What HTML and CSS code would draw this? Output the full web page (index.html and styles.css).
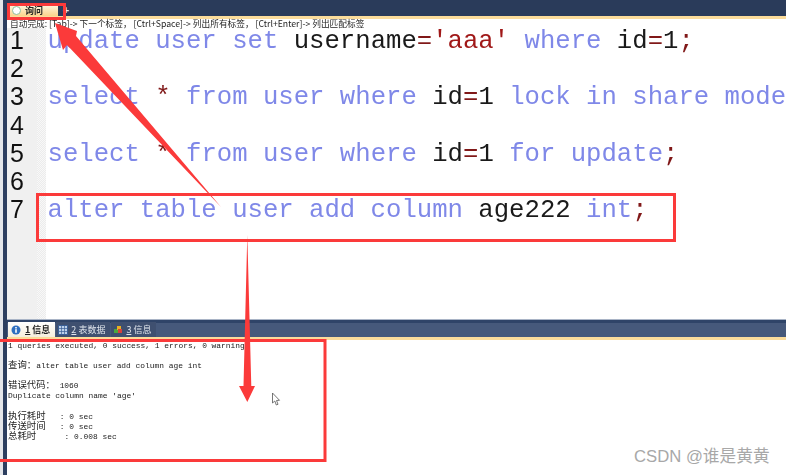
FILE: index.html
```html
<!DOCTYPE html>
<html lang="zh">
<head>
<meta charset="utf-8">
<title>查询</title>
<link rel="stylesheet" href="styles.css">
</head>
<body>
<div class="app">
  <div class="edge"></div>
  <div class="main">
    <div class="tabbar">
      <div class="tab"><span class="ring"></span><span>询问</span></div>
      <div class="plus">+</div>
    </div>
    <div class="hint">自动完成: [Tab]-&gt; 下一个标签， [Ctrl+Space]-&gt; 列出所有标签， [Ctrl+Enter]-&gt; 列出匹配标签</div>
    <div class="editor">
      <div class="gutter">
        <div class="nums"><div>1</div><div>2</div><div>3</div><div>4</div><div>5</div><div>6</div><div>7</div></div>
        <div class="fold"></div>
      </div>
      <pre class="code"><span class="k">update user set</span> username<span class="o">=</span><span class="s">'aaa'</span> <span class="k">where</span> id<span class="o">=</span>1<span class="o">;</span>

<span class="k">select</span> <span class="o">*</span> <span class="k">from user where</span> id<span class="o">=</span>1 <span class="k">lock in share mode</span><span class="o">;</span>

<span class="k">select</span> <span class="o">*</span> <span class="k">from user where</span> id<span class="o">=</span>1 <span class="k">for update</span><span class="o">;</span>

<span class="k">alter table user add column</span> age222 <span class="k">int</span><span class="o">;</span></pre>
    </div>
    <div class="panelbar">
      <div class="ptab active"><svg class="ic" viewBox="0 0 10 10"><circle cx="5" cy="5" r="4.500" fill="#2f6fc0"/><rect x="4.200" y="2" width="1.600" height="1.500" fill="#fff"/><rect x="4.200" y="4.200" width="1.600" height="3.600" fill="#fff"/></svg><span><u>1</u> 信息</span></div>
      <div class="ptab"><svg class="ic" viewBox="0 0 10 10"><rect x=".5" y=".5" width="9" height="9" fill="#bcd0ea" stroke="#3a5f96"/><path d="M.5 3.500h9M.5 6.500h9M3.500.5v9M6.500.5v9" stroke="#3a5f96" stroke-width=".7"/></svg><span><u>2</u> 表数据</span></div>
      <div class="ptab"><svg class="ic" viewBox="0 0 10 10"><rect x="1" y="4" width="4" height="4" fill="#4aa83c"/><rect x="4" y="1" width="4" height="4" fill="#e8b020"/><rect x="5" y="4" width="4" height="4" fill="#d8403c"/></svg><span><u>3</u> 信息</span></div>
    </div>
    <pre class="output">1 queries executed, 0 success, 1 errors, 0 warning

<span class="zh">查询：</span>alter table user add column age int

<span class="zh">错误代码：</span> 1060
Duplicate column name 'age'

<span class="zh">执行耗时</span>   : 0 sec
<span class="zh">传送时间</span>   : 0 sec
<span class="zh">总耗时</span>      : 0.008 sec</pre>
  </div>
</div>
<svg class="marks" viewBox="0 0 786 475" width="786" height="475">
  <g fill="none" stroke="#fb3a3a" stroke-width="3">
    <rect x="8.500" y="4.500" width="56" height="14"/>
    <rect x="37.500" y="194.500" width="637" height="46"/>
    <rect x="-2" y="340.500" width="327" height="120"/>
  </g>
  <g fill="#fb3a3a">
    <path d="M55 23 L77 31 L76 36 L221 207 L67 45 L63 50 Z"/>
    <path d="M247.300 235 L243.500 386 L239 386 L247.300 402 L255 386 L251.300 386 Z"/>
  </g>
  <path d="M272.500 393 V403 L274.800 401 L276.300 405 L278 404.300 L276.500 400.500 L279.500 400.300 Z" fill="#fff" stroke="#555" stroke-width=".8"/>
</svg>
<div class="watermark">CSDN @谁是黄黄</div>
</body>
</html>
```
FILE: styles.css
```css
* { box-sizing: border-box; }
html, body { margin: 0; padding: 0; background: #fff; }
body { width: 786px; height: 475px; overflow: hidden; position: relative; font-family: "Liberation Sans", "Noto Sans CJK SC", sans-serif; }
.app { display: flex; width: 786px; height: 475px; }
.edge { width: 7px; flex: none; background: linear-gradient(90deg, #e4e6ea 0 3px, #2d3f60 3px 7px); }
.main { flex: 1; min-width: 0; display: flex; flex-direction: column; }
.tabbar { height: 16px; flex: none; background: #2a3b5a; display: flex; align-items: flex-end; padding-left: 1px; }
.tab { width: 50px; height: 12px; background: linear-gradient(#fff8e6, #fbd48c); display: flex; align-items: center; gap: 4px; padding-left: 4px; font: bold 9px "Noto Sans CJK SC", sans-serif; color: #222; filter: blur(.3px); }
.ring { width: 9px; height: 9px; border-radius: 50%; border: 1.500px solid #8fbf9c; background: #fff; }
.plus { width: 8px; height: 12px; margin-left: 4px; color: #e4e8f0; font: bold 11px/12px "Liberation Sans", sans-serif; text-align: center; }
.hint { height: 12px; flex: none; border-top: 3px solid #fbdc9b; background: #fff; padding-left: 3px; font: 8.700px/9px "Noto Sans CJK SC", sans-serif; color: #222; white-space: nowrap; filter: blur(.3px); }
.editor { flex: 1; min-height: 0; display: flex; overflow: hidden; background: #fff; }
.gutter { width: 39px; flex: none; display: flex; background: #f0f0f0; }
.nums { width: 30px; flex: none; margin-top: -2px; padding-left: 3px; font: 25px/28.200px "Liberation Sans", sans-serif; color: #111; filter: blur(.3px); }
.fold { flex: 1; background: repeating-conic-gradient(#f8f8f8 0 25%, #ececec 0 50%) 0 0 / 2px 2px; }
.code { margin: 0; padding: 0 0 0 1.500px; font: 25.650px/28.200px "Liberation Mono", monospace; color: #1a1a1a; white-space: pre; filter: blur(.3px); }
.k { color: #7f88e8; }
.o { color: #801818; }
.s { color: #a01818; }
.panelbar { height: 21px; flex: none; display: flex; align-items: flex-end; padding-left: 1px; background: linear-gradient(#a9b4c6 0 1px, #2f4468 1px 4px, #46597b 4px 18px, #fbdc9b 18px); padding-bottom: 3px; }
.ptab { height: 15px; display: flex; align-items: center; gap: 3px; padding: 0 5px 0 2px; background: #3f5070; color: #dfe4ec; font: 9px "Noto Sans CJK SC", sans-serif; filter: blur(.25px); }
.ptab + .ptab { margin-left: 1px; }
.ptab.active { padding: 0 5px 0 3px; gap: 4px; background: linear-gradient(#fff, #f6eedc); color: #222; font-weight: bold; }
.ic { width: 10px; height: 10px; flex: none; }
.output { margin: 0; height: 135px; flex: none; padding: 1px 0 0 1px; font: 7.900px/10.100px "Liberation Mono", monospace; color: #222; background: #fff; white-space: pre; overflow: hidden; filter: blur(.25px); }
.zh { font: 9.400px/0 "Noto Sans CJK SC", sans-serif; }
.marks { position: absolute; left: 0; top: 0; pointer-events: none; }
.watermark { position: absolute; left: 634px; top: 447px; font: 16.700px/20px "Liberation Sans", "Noto Sans CJK SC", sans-serif; color: #a8a8a8; white-space: nowrap; }
```
